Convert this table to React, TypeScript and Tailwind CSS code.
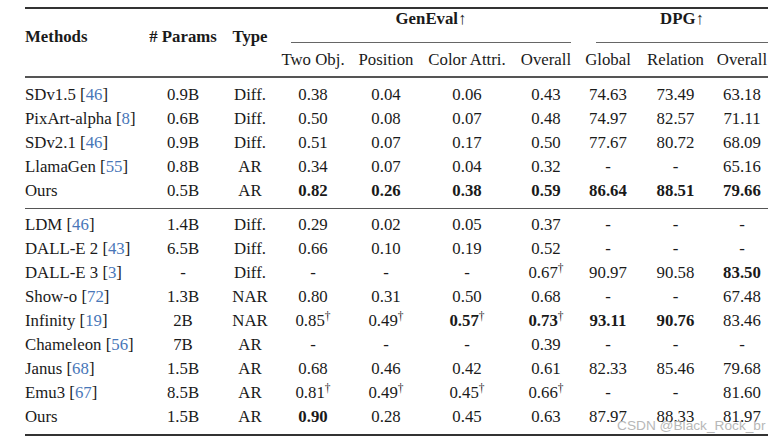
type Cell = string | { v: string; b?: boolean; d?: boolean };

type Row = { name: string; cite?: string; params: string; type: string; vals: Cell[] };

const top: Row[] = [
  { name: 'SDv1.5', cite: '46', params: '0.9B', type: 'Diff.', vals: ['0.38', '0.04', '0.06', '0.43', '74.63', '73.49', '63.18'] },
  { name: 'PixArt-alpha', cite: '8', params: '0.6B', type: 'Diff.', vals: ['0.50', '0.08', '0.07', '0.48', '74.97', '82.57', '71.11'] },
  { name: 'SDv2.1', cite: '46', params: '0.9B', type: 'Diff.', vals: ['0.51', '0.07', '0.17', '0.50', '77.67', '80.72', '68.09'] },
  { name: 'LlamaGen', cite: '55', params: '0.8B', type: 'AR', vals: ['0.34', '0.07', '0.04', '0.32', '-', '-', '65.16'] },
  {
    name: 'Ours', params: '0.5B', type: 'AR',
    vals: [{ v: '0.82', b: true }, { v: '0.26', b: true }, { v: '0.38', b: true }, { v: '0.59', b: true }, { v: '86.64', b: true }, { v: '88.51', b: true }, { v: '79.66', b: true }],
  },
];

const bottom: Row[] = [
  { name: 'LDM', cite: '46', params: '1.4B', type: 'Diff.', vals: ['0.29', '0.02', '0.05', '0.37', '-', '-', '-'] },
  { name: 'DALL-E 2', cite: '43', params: '6.5B', type: 'Diff.', vals: ['0.66', '0.10', '0.19', '0.52', '-', '-', '-'] },
  { name: 'DALL-E 3', cite: '3', params: '-', type: 'Diff.', vals: ['-', '-', '-', { v: '0.67', d: true }, '90.97', '90.58', { v: '83.50', b: true }] },
  { name: 'Show-o', cite: '72', params: '1.3B', type: 'NAR', vals: ['0.80', '0.31', '0.50', '0.68', '-', '-', '67.48'] },
  {
    name: 'Infinity', cite: '19', params: '2B', type: 'NAR',
    vals: [{ v: '0.85', d: true }, { v: '0.49', d: true }, { v: '0.57', b: true, d: true }, { v: '0.73', b: true, d: true }, { v: '93.11', b: true }, { v: '90.76', b: true }, '83.46'],
  },
  { name: 'Chameleon', cite: '56', params: '7B', type: 'AR', vals: ['-', '-', '-', '0.39', '-', '-', '-'] },
  { name: 'Janus', cite: '68', params: '1.5B', type: 'AR', vals: ['0.68', '0.46', '0.42', '0.61', '82.33', '85.46', '79.68'] },
  { name: 'Emu3', cite: '67', params: '8.5B', type: 'AR', vals: [{ v: '0.81', d: true }, { v: '0.49', d: true }, { v: '0.45', d: true }, { v: '0.66', d: true }, '-', '-', '81.60'] },
  { name: 'Ours', params: '1.5B', type: 'AR', vals: [{ v: '0.90', b: true }, '0.28', '0.45', '0.63', '87.97', '88.33', '81.97'] },
];

const cols = 'grid grid-cols-[118px_80px_54px_72px_74px_88px_70px_54px_81px_52px]';

function Value({ c }: { c: Cell }) {
  const cell = typeof c === 'string' ? { v: c } : c;
  return (
    <div className={`text-center whitespace-nowrap ${cell.b ? 'font-bold' : ''}`}>
      {cell.v}
      {cell.d && <span className="relative -top-[6px] text-[11.5px] font-normal leading-none">†</span>}
    </div>
  );
}

function TableRow({ r }: { r: Row }) {
  return (
    <div className={`${cols} h-6 items-center`}>
      <div className="whitespace-nowrap">
        {r.name}
        {r.cite && (
          <>
            {' '}[<span className="text-[#4876b8]">{r.cite}</span>]
          </>
        )}
      </div>
      <div className="text-center">{r.params}</div>
      <div className="text-center">{r.type}</div>
      {r.vals.map((c, i) => (
        <Value key={i} c={c} />
      ))}
    </div>
  );
}

export default function App() {
  return (
    <div
      className="relative w-[771px] h-[442px] overflow-hidden bg-white text-[#1a1a1a] text-[16.8px] leading-6"
      style={{ fontFamily: '"Liberation Serif", "Times New Roman", serif' }}
    >
      <div className="pt-[7px] pl-[25px] w-[768px]">
        <div className="h-[2px] bg-[#333]" />

        {/* header */}
        <div className={`${cols} grid-rows-[34px_33px]`}>
          <div className="row-span-2 pt-4 font-bold">Methods</div>
          <div className="row-span-2 pt-4 text-center font-bold whitespace-nowrap"># Params</div>
          <div className="row-span-2 pt-4 text-center font-bold">Type</div>
          <div className="col-span-4 flex flex-col justify-between">
            <div className="text-center font-bold leading-5 pl-[14px] pr-[10px]">GenEval↑</div>
            <div className="h-px bg-[#666] ml-[14px] mr-[10px]" />
          </div>
          <div className="col-span-3 flex flex-col justify-between">
            <div className="text-center font-bold leading-5 pl-[15px]">DPG↑</div>
            <div className="h-px bg-[#666] ml-[15px]" />
          </div>
          {['Two Obj.', 'Position', 'Color Attri.', 'Overall', 'Global', 'Relation', 'Overall'].map((h, i) => (
            <div key={i} className="flex items-center justify-center whitespace-nowrap">
              {h}
            </div>
          ))}
        </div>

        <div className="h-[1.5px] bg-[#555]" />
        <div className="pt-[5px] pb-[5px]">
          {top.map((r, i) => (
            <TableRow key={i} r={r} />
          ))}
        </div>
        <div className="h-[1.5px] bg-[#555]" />
        <div className="pt-[4px] pb-[5px]">
          {bottom.map((r, i) => (
            <TableRow key={i} r={r} />
          ))}
        </div>
        <div className="h-[2px] bg-[#333]" />
      </div>

      {/* watermark */}
      <div
        className="absolute left-[617px] top-[418px] text-[13.7px] leading-4 text-[#b8b8b8] whitespace-nowrap"
        style={{ fontFamily: '"Liberation Sans", Arial, sans-serif' }}
      >
        CSDN @Black_Rock_br
      </div>
    </div>
  );
}
